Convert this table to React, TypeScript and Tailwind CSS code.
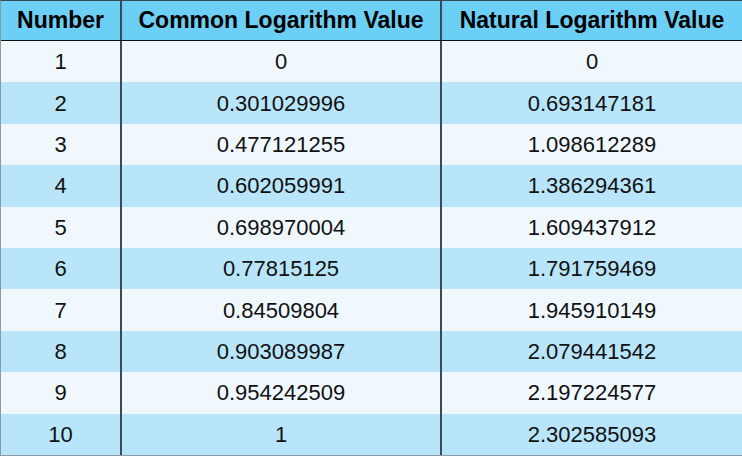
import React from "react";

const rows: [string, string, string][] = [
  ["1", "0", "0"],
  ["2", "0.301029996", "0.693147181"],
  ["3", "0.477121255", "1.098612289"],
  ["4", "0.602059991", "1.386294361"],
  ["5", "0.698970004", "1.609437912"],
  ["6", "0.77815125", "1.791759469"],
  ["7", "0.84509804", "1.945910149"],
  ["8", "0.903089987", "2.079441542"],
  ["9", "0.954242509", "2.197224577"],
  ["10", "1", "2.302585093"],
];

export default function App() {
  return (
    <div
      className="w-[742px] h-[456px] flex flex-col bg-[#f0f8fe] border-l border-l-[#8a9aa6] border-t border-t-[#3a4a55] border-b border-b-[#8a9aa6] text-[22px] text-[#111]"
      style={{ fontFamily: '"Liberation Sans", Arial, sans-serif' }}
    >
      <div className="flex h-[40px] bg-[#6ccff6] border-b border-b-[#111] font-bold text-[23px] text-black shrink-0">
        <div className="w-[121px] flex items-center justify-center border-r-2 border-r-[#3b4a55]">Number</div>
        <div className="w-[320px] flex items-center justify-center border-r-2 border-r-[#3b4a55]">Common Logarithm Value</div>
        <div className="flex-1 flex items-center justify-center">Natural Logarithm Value</div>
      </div>
      {rows.map((r, i) => (
        <div key={i} className={`flex flex-1 ${i % 2 === 0 ? "bg-[#f0f8fe]" : "bg-[#b8e5f9]"}`}>
          <div className="w-[121px] flex items-center justify-center border-r-2 border-r-[#3b4a55]">{r[0]}</div>
          <div className="w-[320px] flex items-center justify-center border-r-2 border-r-[#3b4a55]">{r[1]}</div>
          <div className="flex-1 flex items-center justify-center">{r[2]}</div>
        </div>
      ))}
    </div>
  );
}
